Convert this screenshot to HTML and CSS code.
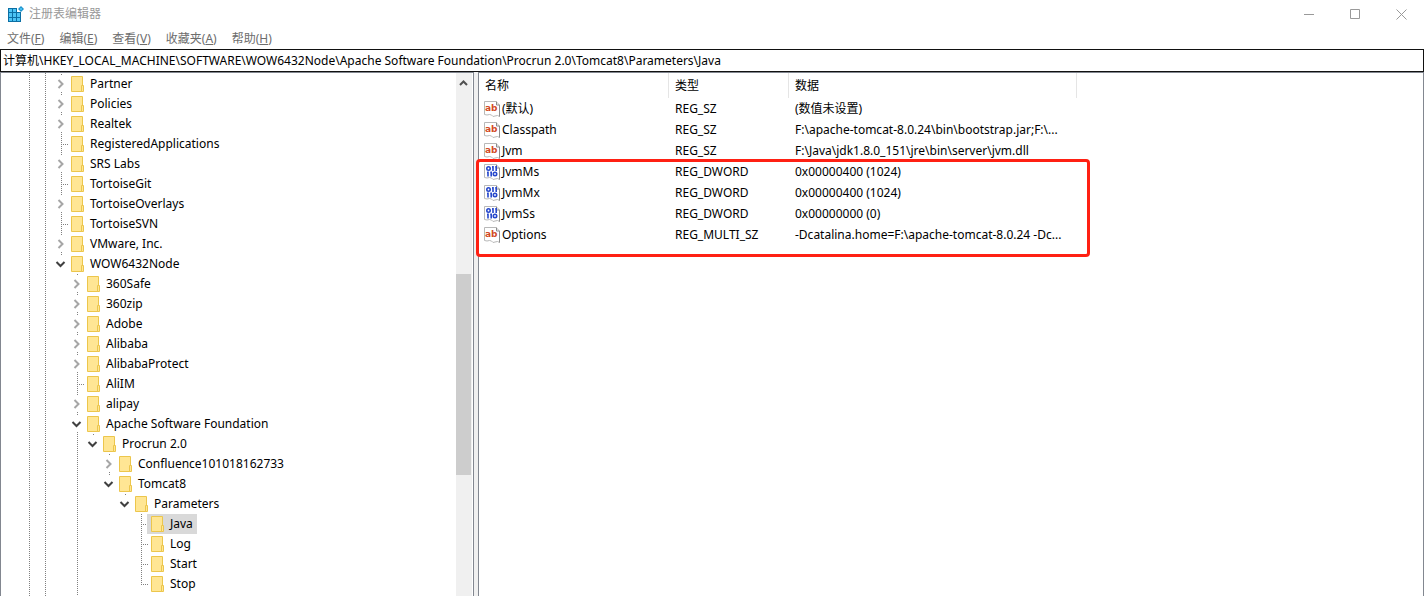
FILE: index.html
```
<!DOCTYPE html>
<html lang="zh-CN">
<head>
  <meta charset="UTF-8">
  <meta name="viewport" content="width=device-width, initial-scale=1.0">
  <title>注册表编辑器</title>
  <link rel="stylesheet" href="styles.css">
</head>
<body>
  <!-- 公用图标 -->
  <svg class="sprite" aria-hidden="true">
    <symbol id="folder" viewBox="0 0 13 16">
      <path d="M.5 .5h11v15h-11z" fill="#ffe694" stroke="#ecc64c"/>
      <path d="M10.5 9.5h2v6h-2z" fill="#ffe694" stroke="#ecc64c"/>
    </symbol>
    <symbol id="closed" viewBox="0 0 14 16">
      <path d="M5.500 4l4 4-4 4" fill="none" stroke="#a6a6a6" stroke-width="2"/>
    </symbol>
    <symbol id="open" viewBox="0 0 14 16">
      <path d="M3.500 6l4 4 4-4" fill="none" stroke="#404040" stroke-width="2"/>
    </symbol>
    <symbol id="page" viewBox="0 0 16 16">
      <path d="M.5 .5h11.500l3.500 3.500v11.500l-2-1-2.500 .5-2 .500-1.500-1.500-2-.500-2.500 .5-2.500-.500z" fill="#fff" stroke="#b8b8b8"/>
      <path d="M12.500 .5v3.500h3v11.500" fill="none" stroke="#8c8c8c"/>
    </symbol>
    <symbol id="string" viewBox="0 0 16 16">
      <use href="#page"/>
      <text class="ab" x="1" y="10">ab</text>
    </symbol>
    <symbol id="binary" viewBox="0 0 16 16">
      <use href="#page"/>
      <g fill="none" stroke="#2748cc" stroke-width="1.600">
        <circle cx="4.500" cy="4.500" r="1.700"/>
        <circle cx="11" cy="10" r="1.700"/>
        <path d="M9 2v5M12.200 2v5M8 3h1M11.200 3h1M4 7.500v5M7.200 7.500v5M3 8.500h1M6.200 8.500h1"/>
      </g>
    </symbol>
  </svg>

  <header class="titlebar">
    <svg class="app-icon" width="16" height="16" viewBox="0 0 16 16" aria-hidden="true">
      <path d="M0 2h9v4h4v10H0z" fill="#0b6fa4"/>
      <path d="M1 3h3v3H1zM5 3h3v3H5zM1 7h3v4H1zM5 7h3v4H5zM9 7h3v4H9zM1 12h3v3H1zM5 12h3v3H5zM9 12h3v3H9z" fill="#4cc4f5"/>
      <path d="M13 0l3 3-3 3-3-3z" fill="#1a8fc9"/>
      <path d="M13 1.500l1.500 1.500-1.500 1.500-1.500-1.500z" fill="#4cc4f5"/>
    </svg>
    <span class="title">注册表编辑器</span>
    <div class="window-buttons">
      <button type="button" aria-label="最小化"><svg width="11" height="11" viewBox="0 0 11 11"><path d="M0 5.500h10"/></svg></button>
      <button type="button" aria-label="最大化"><svg width="11" height="11" viewBox="0 0 11 11"><path d="M.5 .5h9v9h-9z"/></svg></button>
      <button type="button" aria-label="关闭"><svg width="11" height="11" viewBox="0 0 11 11"><path d="M.5 .5l10 10M10.500 .5l-10 10"/></svg></button>
    </div>
  </header>

  <nav class="menubar">
    <button type="button">文件(<u>F</u>)</button>
    <button type="button">编辑(<u>E</u>)</button>
    <button type="button">查看(<u>V</u>)</button>
    <button type="button">收藏夹(<u>A</u>)</button>
    <button type="button">帮助(<u>H</u>)</button>
  </nav>

  <input class="address" type="text" aria-label="地址" value="计算机\HKEY_LOCAL_MACHINE\SOFTWARE\WOW6432Node\Apache Software Foundation\Procrun 2.0\Tomcat8\Parameters\Java">

  <main class="panes">
    <section class="tree-pane">
      <ul class="tree">
        <li class="more"><ul>
          <li class="more"><ul>
            <li><div class="row"><button class="toggle" aria-label="展开"><svg><use href="#closed"/></svg></button><span class="key"><svg><use href="#folder"/></svg>Partner</span></div></li>
            <li><div class="row"><button class="toggle" aria-label="展开"><svg><use href="#closed"/></svg></button><span class="key"><svg><use href="#folder"/></svg>Policies</span></div></li>
            <li><div class="row"><button class="toggle" aria-label="展开"><svg><use href="#closed"/></svg></button><span class="key"><svg><use href="#folder"/></svg>Realtek</span></div></li>
            <li><div class="row leaf"><span class="key"><svg><use href="#folder"/></svg>RegisteredApplications</span></div></li>
            <li><div class="row"><button class="toggle" aria-label="展开"><svg><use href="#closed"/></svg></button><span class="key"><svg><use href="#folder"/></svg>SRS Labs</span></div></li>
            <li><div class="row leaf"><span class="key"><svg><use href="#folder"/></svg>TortoiseGit</span></div></li>
            <li><div class="row"><button class="toggle" aria-label="展开"><svg><use href="#closed"/></svg></button><span class="key"><svg><use href="#folder"/></svg>TortoiseOverlays</span></div></li>
            <li><div class="row leaf"><span class="key"><svg><use href="#folder"/></svg>TortoiseSVN</span></div></li>
            <li><div class="row"><button class="toggle" aria-label="展开"><svg><use href="#closed"/></svg></button><span class="key"><svg><use href="#folder"/></svg>VMware, Inc.</span></div></li>
            <li class="last"><div class="row"><button class="toggle" aria-label="折叠"><svg><use href="#open"/></svg></button><span class="key"><svg><use href="#folder"/></svg>WOW6432Node</span></div>
              <ul>
                <li><div class="row"><button class="toggle" aria-label="展开"><svg><use href="#closed"/></svg></button><span class="key"><svg><use href="#folder"/></svg>360Safe</span></div></li>
                <li><div class="row"><button class="toggle" aria-label="展开"><svg><use href="#closed"/></svg></button><span class="key"><svg><use href="#folder"/></svg>360zip</span></div></li>
                <li><div class="row"><button class="toggle" aria-label="展开"><svg><use href="#closed"/></svg></button><span class="key"><svg><use href="#folder"/></svg>Adobe</span></div></li>
                <li><div class="row"><button class="toggle" aria-label="展开"><svg><use href="#closed"/></svg></button><span class="key"><svg><use href="#folder"/></svg>Alibaba</span></div></li>
                <li><div class="row"><button class="toggle" aria-label="展开"><svg><use href="#closed"/></svg></button><span class="key"><svg><use href="#folder"/></svg>AlibabaProtect</span></div></li>
                <li><div class="row leaf"><span class="key"><svg><use href="#folder"/></svg>AliIM</span></div></li>
                <li><div class="row"><button class="toggle" aria-label="展开"><svg><use href="#closed"/></svg></button><span class="key"><svg><use href="#folder"/></svg>alipay</span></div></li>
                <li class="more"><div class="row"><button class="toggle" aria-label="折叠"><svg><use href="#open"/></svg></button><span class="key"><svg><use href="#folder"/></svg>Apache Software Foundation</span></div>
                  <ul>
                    <li class="last"><div class="row"><button class="toggle" aria-label="折叠"><svg><use href="#open"/></svg></button><span class="key"><svg><use href="#folder"/></svg>Procrun 2.0</span></div>
                      <ul>
                        <li><div class="row"><button class="toggle" aria-label="展开"><svg><use href="#closed"/></svg></button><span class="key"><svg><use href="#folder"/></svg>Confluence101018162733</span></div></li>
                        <li class="last"><div class="row"><button class="toggle" aria-label="折叠"><svg><use href="#open"/></svg></button><span class="key"><svg><use href="#folder"/></svg>Tomcat8</span></div>
                          <ul>
                            <li class="last"><div class="row"><button class="toggle" aria-label="折叠"><svg><use href="#open"/></svg></button><span class="key"><svg><use href="#folder"/></svg>Parameters</span></div>
                              <ul>
                                <li><div class="row leaf"><span class="key selected"><svg><use href="#folder"/></svg>Java</span></div></li>
                                <li><div class="row leaf"><span class="key"><svg><use href="#folder"/></svg>Log</span></div></li>
                                <li><div class="row leaf"><span class="key"><svg><use href="#folder"/></svg>Start</span></div></li>
                                <li class="last"><div class="row leaf"><span class="key"><svg><use href="#folder"/></svg>Stop</span></div></li>
                              </ul>
                            </li>
                          </ul>
                        </li>
                      </ul>
                    </li>
                  </ul>
                </li>
              </ul>
            </li>
          </ul></li>
        </ul></li>
      </ul>
      <div class="scrollbar">
        <button type="button" class="scroll-up" aria-label="向上滚动"><svg width="9" height="6" viewBox="0 0 9 6"><path d="M1 5l3.500-3.500 3.500 3.500"/></svg></button>
        <div class="track-before"></div>
        <div class="thumb"></div>
        <div class="track-after"></div>
      </div>
    </section>

    <section class="value-pane">
      <table class="values">
        <colgroup><col class="col-name"><col class="col-type"><col class="col-data"></colgroup>
        <thead>
          <tr><th>名称</th><th>类型</th><th>数据</th></tr>
        </thead>
        <tbody>
          <tr><td><svg><use href="#string"/></svg>(默认)</td><td>REG_SZ</td><td>(数值未设置)</td></tr>
          <tr><td><svg><use href="#string"/></svg>Classpath</td><td>REG_SZ</td><td>F:\apache-tomcat-8.0.24\bin\bootstrap.jar;F:\...</td></tr>
          <tr><td><svg><use href="#string"/></svg>Jvm</td><td>REG_SZ</td><td>F:\Java\jdk1.8.0_151\jre\bin\server\jvm.dll</td></tr>
          <tr><td><svg><use href="#binary"/></svg>JvmMs</td><td>REG_DWORD</td><td>0x00000400 (1024)</td></tr>
          <tr><td><svg><use href="#binary"/></svg>JvmMx</td><td>REG_DWORD</td><td>0x00000400 (1024)</td></tr>
          <tr><td><svg><use href="#binary"/></svg>JvmSs</td><td>REG_DWORD</td><td>0x00000000 (0)</td></tr>
          <tr><td><svg><use href="#string"/></svg>Options</td><td>REG_MULTI_SZ</td><td>-Dcatalina.home=F:\apache-tomcat-8.0.24 -Dc...</td></tr>
        </tbody>
      </table>
      <div class="highlight"></div>
    </section>
  </main>
</body>
</html>
```
FILE: styles.css
```
* {
  box-sizing: border-box;
}
body {
  font-family: 'Noto Sans', 'Noto Sans CJK SC', sans-serif;
  font-size: 12px;
  line-height: 20px;
  color: #000;
  background-color: white;
  margin: 0;
  height: 100vh;
  display: flex;
  flex-direction: column;
  overflow: hidden;
}
button {
  font: inherit;
  color: inherit;
  background: none;
  border: none;
  padding: 0;
}
ul {
  list-style: none;
  margin: 0;
  padding: 0;
}
.sprite {
  position: absolute;
  width: 0;
  height: 0;
}
.ab {
  font: bold 9px 'DejaVu Sans', sans-serif;
  fill: #d24a26;
}

/* 标题栏 */
.titlebar {
  display: flex;
  align-items: center;
  height: 28px;
  padding-left: 8px;
  color: #999;
}
.title {
  flex: 1;
  margin-left: 5px;
}
.window-buttons {
  display: flex;
}
.window-buttons button {
  display: flex;
  align-items: center;
  justify-content: center;
  width: 46px;
  height: 26px;
}
.window-buttons path {
  fill: none;
  stroke: #999;
}

/* 菜单栏 */
.menubar {
  display: flex;
  gap: 15px;
  height: 21px;
  padding-left: 7px;
  color: #6d6d6d;
}

.address {
  width: 100%;
  height: 23px;
  flex: none;
  border: 1px solid #111;
  padding: 0 2px 1px;
  font: inherit;
  color: inherit;
  outline: none;
}

.panes {
  flex: 1;
  min-height: 0;
  display: flex;
  gap: 4px;
  background-color: #f0f0f0;
}

/* 左侧树 */
.tree-pane {
  display: flex;
  width: 474px;
  overflow: hidden;
  background-color: white;
  border: 1px solid #828790;
  border-bottom: none;
}
.tree {
  flex: 1;
  padding-left: 20px;
}
.tree ul {
  padding-left: 16px;
}
.tree > li > ul > li > ul {
  padding-top: 1px;
}
.tree li {
  background: repeating-linear-gradient(#808080 0 1px, transparent 1px 2px) 8px 0 / 1px 100% no-repeat;
}
.tree li.last {
  background-size: 1px 11px;
}
/* 下方还有未显示的项 */
.tree li.more {
  padding-bottom: 20px;
}
.row {
  display: flex;
  align-items: center;
  height: 20px;
}
.row.leaf {
  padding-left: 14px;
  background: repeating-linear-gradient(90deg, #808080 0 1px, transparent 1px 2px) 8px 10px / 7px 1px no-repeat;
}
.toggle {
  width: 14px;
  height: 16px;
  background-color: white;
}
.toggle svg {
  display: block;
  width: 14px;
  height: 16px;
}
.key {
  display: flex;
  align-items: center;
  gap: 6px;
  padding: 0 4px;
  white-space: nowrap;
}
.key svg {
  width: 13px;
  height: 16px;
}
.key.selected {
  background-color: #d9d9d9;
}

.scrollbar {
  display: flex;
  flex-direction: column;
  width: 17px;
  padding-top: 1px;
  background-color: #f0f0f0;
  border-right: 1px solid white;
}
.scroll-up {
  display: flex;
  align-items: center;
  justify-content: center;
  width: 15px;
  height: 17px;
}
.scroll-up path {
  fill: none;
  stroke: #505050;
  stroke-width: 2;
}
.track-before {
  flex: 183;
}
.thumb {
  flex: 201;
  margin-right: 1px;
  background-color: #cdcdcd;
}
.track-after {
  flex: 121;
}

/* 右侧列表 */
.value-pane {
  position: relative;
  flex: 1;
  background-color: white;
  border: 1px solid #828790;
  border-bottom: none;
}
.values {
  width: 598px;
  table-layout: fixed;
  border-spacing: 0;
}
.col-name {
  width: 190px;
}
.col-type {
  width: 120px;
}
.values th {
  height: 25px;
  padding: 0 6px;
  border-right: 1px solid #e5e5e5;
  font-weight: normal;
  text-align: left;
}
.values td {
  height: 21px;
  padding: 0 6px;
  white-space: nowrap;
}
.values td:first-child {
  display: flex;
  align-items: center;
  gap: 2px;
  padding-left: 5px;
}
.values svg {
  width: 16px;
  height: 16px;
}
.highlight {
  position: absolute;
  left: -3px;
  top: 86px;
  width: 614px;
  height: 98px;
  border: 3px solid #ff2013;
  border-radius: 4px;
}
```
